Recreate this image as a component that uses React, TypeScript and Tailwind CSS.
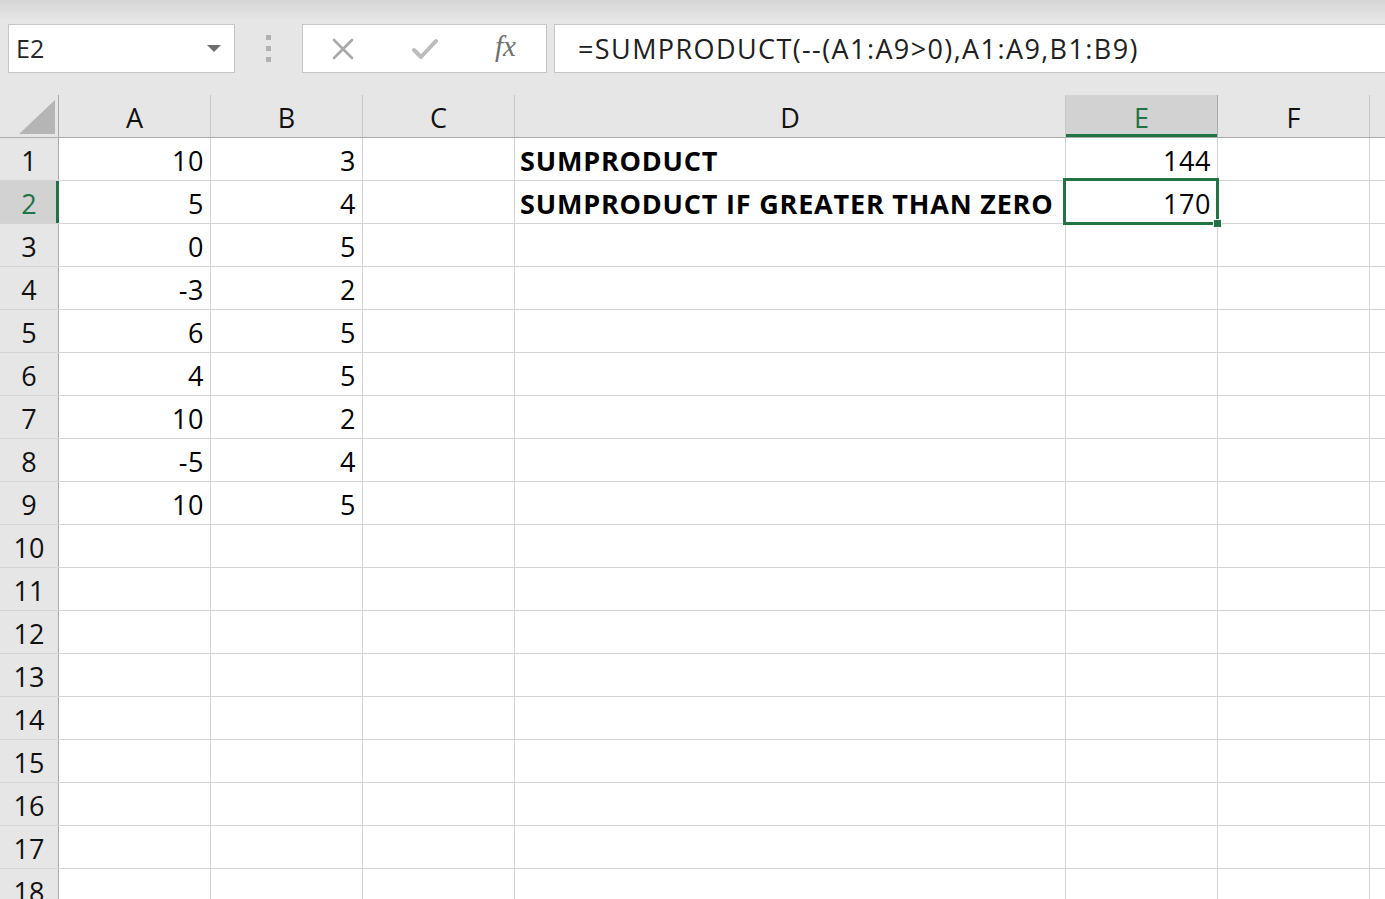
import React from "react";

const cols = [
  { name: "A", w: 152 },
  { name: "B", w: 152 },
  { name: "C", w: 152 },
  { name: "D", w: 551 },
  { name: "E", w: 152 },
  { name: "F", w: 152 },
  { name: "", w: 200 },
];

const aVals = ["10", "5", "0", "-3", "6", "4", "10", "-5", "10"];
const bVals = ["3", "4", "5", "2", "5", "5", "2", "4", "5"];

function cellContent(r: number, c: number): { text: string; align: "left" | "right"; bold?: boolean } | null {
  if (c === 0 && r < 9) return { text: aVals[r], align: "right" };
  if (c === 1 && r < 9) return { text: bVals[r], align: "right" };
  if (c === 3 && r === 0) return { text: "SUMPRODUCT", align: "left", bold: true };
  if (c === 3 && r === 1) return { text: "SUMPRODUCT IF GREATER THAN ZERO", align: "left", bold: true };
  if (c === 4 && r === 0) return { text: "144", align: "right" };
  if (c === 4 && r === 1) return { text: "170", align: "right" };
  return null;
}

function Toolbar() {
  return (
    <div className="h-[95px] flex items-start pt-[24px] bg-gradient-to-b from-[#d5d5d5] via-[#e6e6e6] via-[22%] to-[#e6e6e6]">
      {/* name box */}
      <div className="ml-[8px] w-[227px] h-[49px] bg-white border border-[#c6c6c6] flex items-center justify-between pl-[7px] pr-[13px]">
        <span className="text-[25px] text-[#262626] leading-none">E2</span>
        <svg width="14" height="8" viewBox="0 0 14 8">
          <path d="M0 0 L14 0 L7 7 Z" fill="#6d6d6d" />
        </svg>
      </div>
      {/* grip dots */}
      <div className="w-[67px] h-[49px] flex flex-col items-center justify-center gap-[6px]">
        <div className="w-[5px] h-[5px] bg-[#b1b1b1]" />
        <div className="w-[5px] h-[5px] bg-[#b1b1b1]" />
        <div className="w-[5px] h-[5px] bg-[#b1b1b1]" />
      </div>
      {/* cancel / enter / insert function */}
      <div className="w-[245px] h-[49px] bg-white border border-[#c6c6c6] flex items-center">
        <div className="w-[81px] flex justify-center pr-[2px]">
          <svg width="22" height="22" viewBox="0 0 22 22">
            <path d="M2 2 L20 20 M20 2 L2 20" stroke="#a8a8a8" strokeWidth="2.6" strokeLinecap="round" />
          </svg>
        </div>
        <div className="w-[81px] flex justify-center">
          <svg width="26" height="22" viewBox="0 0 26 22">
            <path d="M2 12 L9 19 L24 3" stroke="#bcbcbc" strokeWidth="4" fill="none" strokeLinejoin="round" strokeLinecap="round" />
          </svg>
        </div>
        <div className="w-[81px] flex justify-center">
          <span className="text-[29px] italic text-[#707070] leading-none -mt-[4px]" style={{ fontFamily: '"Liberation Serif", serif' }}>
            fx
          </span>
        </div>
      </div>
      {/* formula bar */}
      <div className="ml-[7px] flex-1 h-[49px] bg-white border border-[#c6c6c6] border-r-0 flex items-center pl-[23px]">
        <span className="text-[27px] text-[#202020] leading-none tracking-[1.4px]">
          =SUMPRODUCT(--(A1:A9&gt;0),A1:A9,B1:B9)
        </span>
      </div>
    </div>
  );
}

function HeaderRow() {
  return (
    <div className="flex h-[43px] border-b border-[#ababab]">
      <div className="w-[59px] shrink-0 border-r border-[#ababab] relative flex items-end justify-end pr-[3px] pb-[3px]">
        <svg width="36" height="34" viewBox="0 0 36 34">
          <path d="M0 34 L36 34 L36 0 Z" fill="#b5b5b5" />
        </svg>
      </div>
      {cols.map((c, i) => {
        const sel = c.name === "E";
        return (
          <div
            key={i}
            className={
              "shrink-0 flex items-center justify-center relative border-r " +
              (sel ? "bg-[#d2d2d2] border-[#ababab] " : "border-[#c8c8c8] ") +
              (c.name === "" ? "border-r-0" : "")
            }
            style={{ width: c.w }}
          >
            <span className={"text-[27px] leading-none pt-[2px] " + (sel ? "text-[#217346]" : "text-[#111]")}>{c.name}</span>
            {sel && <div className="absolute left-0 right-0 bottom-0 h-[3px] bg-[#217346]" />}
          </div>
        );
      })}
    </div>
  );
}

function Row({ r }: { r: number }) {
  const sel = r === 1;
  return (
    <div className="flex h-[43px] border-b border-[#d4d4d4]">
      <div
        className={
          "w-[59px] shrink-0 border-r border-[#ababab] relative flex items-center justify-center " +
          (sel ? "bg-[#d2d2d2]" : "bg-[#e6e6e6]")
        }
      >
        <span className={"text-[27px] leading-none pt-[2px] " + (sel ? "text-[#217346]" : "text-[#111]")}>{r + 1}</span>
        {sel && <div className="absolute right-[-1px] top-0 bottom-0 w-[3px] bg-[#217346]" />}
      </div>
      {cols.map((c, ci) => {
        const content = cellContent(r, ci);
        return (
          <div
            key={ci}
            className={
              "shrink-0 flex items-center " +
              (content?.bold ? "pl-[5px] pr-[6px] " : "px-[6px] ") +
              (c.name === "" ? "" : "border-r border-[#d4d4d4] ") +
              (content?.align === "right" ? "justify-end" : "justify-start")
            }
            style={{ width: c.w }}
          >
            {content && (
              <span
                className={
                  "text-[27px] leading-none pt-[2px] whitespace-nowrap text-black " +
                  (content.bold ? "font-bold tracking-[0.8px]" : "tracking-[0.6px]")
                }
              >
                {content.text}
              </span>
            )}
          </div>
        );
      })}
    </div>
  );
}

export default function App() {
  const rows = Array.from({ length: 18 }, (_, i) => i);
  return (
    <div
      className="w-[1385px] h-[899px] overflow-hidden bg-[#e6e6e6] relative"
      style={{ fontFamily: '"Open Sans", "Noto Sans", sans-serif' }}
    >
      <Toolbar />
      <HeaderRow />
      <div className="bg-white">
        {rows.map((r) => (
          <Row key={r} r={r} />
        ))}
      </div>
      {/* active cell outline with fill handle */}
      <div className="absolute left-[1063px] top-[178px] w-[156px] h-[47px] border-[3px] border-[#217346] pointer-events-none" />
      <div className="absolute left-[1213px] top-[219px] w-[9px] h-[9px] bg-[#217346] border border-white pointer-events-none" />
    </div>
  );
}
